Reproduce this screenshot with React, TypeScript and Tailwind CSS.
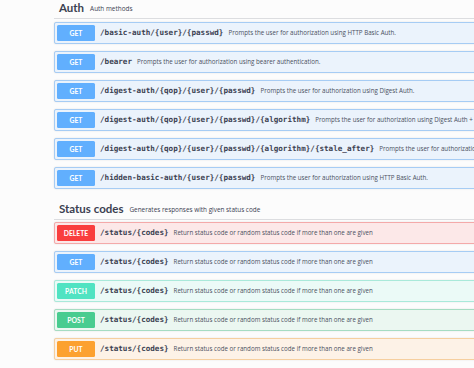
import React from 'react';

type Method = 'GET' | 'DELETE' | 'PATCH' | 'POST' | 'PUT';

const styles: Record<Method, { row: string; badge: string }> = {
  GET: { row: 'bg-[#ebf3fc] border-[#a6ccf4]', badge: 'bg-[#61affe]' },
  DELETE: { row: 'bg-[#fce8e8] border-[#f4a9a9]', badge: 'bg-[#f93e3e]' },
  PATCH: { row: 'bg-[#ebfaf7] border-[#a9e9da]', badge: 'bg-[#50e3c2]' },
  POST: { row: 'bg-[#ebf7f1] border-[#a6dcc2]', badge: 'bg-[#49cc90]' },
  PUT: { row: 'bg-[#fdf2e7] border-[#f6cf9f]', badge: 'bg-[#fca130]' },
};

const authOps: { path: string; desc: string }[] = [
  { path: '/basic-auth/{user}/{passwd}', desc: 'Prompts the user for authorization using HTTP Basic Auth.' },
  { path: '/bearer', desc: 'Prompts the user for authorization using bearer authentication.' },
  { path: '/digest-auth/{qop}/{user}/{passwd}', desc: 'Prompts the user for authorization using Digest Auth.' },
  { path: '/digest-auth/{qop}/{user}/{passwd}/{algorithm}', desc: 'Prompts the user for authorization using Digest Auth + Algorithm.' },
  { path: '/digest-auth/{qop}/{user}/{passwd}/{algorithm}/{stale_after}', desc: 'Prompts the user for authorization using Digest Auth + Algorithm.' },
  { path: '/hidden-basic-auth/{user}/{passwd}', desc: 'Prompts the user for authorization using HTTP Basic Auth.' },
];

const statusMethods: Method[] = ['DELETE', 'GET', 'PATCH', 'POST', 'PUT'];

function Operation({ method, path, desc }: { method: Method; path: string; desc: string }) {
  const s = styles[method];
  return (
    <div
      className={`flex items-center h-[22px] pl-[2px] border rounded-[2px] shadow-[0_0_1.5px_rgba(0,0,0,0.15)] ${s.row}`}
    >
      <span
        className={`w-[38px] h-[16px] shrink-0 rounded-[1.5px] flex items-center justify-center text-white text-[6.8px] font-bold ${s.badge}`}
        style={{ fontFamily: 'Lato, "Open Sans", sans-serif' }}
      >
        {method}
      </span>
      <span
        className="ml-[5px] text-[7.6px] font-bold text-[#3b4151] whitespace-nowrap"
        style={{ fontFamily: '"DejaVu Sans Mono", "Liberation Mono", monospace' }}
      >
        {path}
      </span>
      <span
        className="ml-[5px] text-[6.2px] text-[#4a5060] whitespace-nowrap"
        style={{ fontFamily: '"Open Sans", sans-serif' }}
      >
        {desc}
      </span>
    </div>
  );
}

function TagHeader({ name, desc }: { name: string; desc: string }) {
  return (
    <div className="h-[19px] flex items-end pb-[5px] pl-[5px] border-b border-[#dcdde0] text-[#3b4151]">
      <span className="text-[11.5px] font-bold leading-none" style={{ fontFamily: 'Lato, sans-serif' }}>
        {name}
      </span>
      <span className="ml-[6px] text-[6.4px] leading-none mb-[1px]" style={{ fontFamily: '"Open Sans", sans-serif' }}>
        {desc}
      </span>
    </div>
  );
}

export default function App() {
  return (
    <div className="w-[474px] h-[368px] overflow-hidden bg-[#fcfcfc]">
      <div className="w-[620px] pl-[54px]">
        <TagHeader name="Auth" desc="Auth methods" />
        <div className="mt-[3px] flex flex-col gap-[7px]">
          {authOps.map((op) => (
            <Operation key={op.path} method="GET" path={op.path} desc={op.desc} />
          ))}
        </div>
        <div className="mt-[12px]">
          <TagHeader name="Status codes" desc="Generates responses with given status code" />
        </div>
        <div className="mt-[2px] flex flex-col gap-[7px]">
          {statusMethods.map((m) => (
            <Operation
              key={m}
              method={m}
              path="/status/{codes}"
              desc="Return status code or random status code if more than one are given"
            />
          ))}
        </div>
      </div>
    </div>
  );
}
